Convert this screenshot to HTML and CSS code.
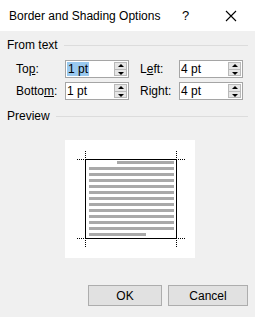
FILE: index.html
```html
<!DOCTYPE html>
<html>
<head>
<meta charset="utf-8">
<link rel="stylesheet" href="styles.css">
</head>
<body>
<div class="dialog">
  <div class="titlebar">
    <span class="title">Border and Shading Options</span>
    <span class="help">?</span>
    <span class="close"><svg width="12" height="12" viewBox="0 0 12 12"><path d="M1 1L11 11M11 1L1 11" stroke="#000" stroke-width="1.1" fill="none"/></svg></span>
  </div>
  <div class="content">
    <div class="legend"><span>From text</span><span class="rule"></span></div>
    <div class="fields">
      <label class="lbl">To<u>p</u>:</label>
      <div class="spin"><span class="val"><span class="sel">1 pt</span></span><span class="arrows"><span class="up"></span><span class="down"></span></span></div>
      <label class="lbl lbl2">L<u>e</u>ft:</label>
      <div class="spin"><span class="val">4 pt</span><span class="arrows"><span class="up"></span><span class="down"></span></span></div>
      <label class="lbl">Botto<u>m</u>:</label>
      <div class="spin"><span class="val">1 pt</span><span class="arrows"><span class="up"></span><span class="down"></span></span></div>
      <label class="lbl lbl2">Ri<u>g</u>ht:</label>
      <div class="spin"><span class="val">4 pt</span><span class="arrows"><span class="up"></span><span class="down"></span></span></div>
    </div>
    <div class="legend legend2"><span>Preview</span><span class="rule"></span></div>
    <div class="preview">
      <div class="page">
        <span class="mark tl"></span><span class="mark tr"></span><span class="mark bl"></span><span class="mark br"></span>
        <div class="line first"></div>
        <div class="line"></div><div class="line"></div><div class="line"></div><div class="line"></div>
        <div class="line"></div><div class="line"></div><div class="line"></div><div class="line"></div>
        <div class="line"></div><div class="line"></div><div class="line"></div>
        <div class="line last"></div>
      </div>
    </div>
    <div class="buttons">
      <button class="btn ok">OK</button>
      <button class="btn cancel">Cancel</button>
    </div>
  </div>
</div>
</body>
</html>
```

FILE: styles.css
```css
html, body {
  margin: 0;
  padding: 0;
  background: #f0f0f0;
}
.dialog {
  width: 255px;
  height: 317px;
  font-family: "Liberation Sans", Arial, sans-serif;
  font-size: 12px;
  color: #000;
  background: #f0f0f0;
}
.titlebar {
  height: 31px;
  background: #fff;
  display: flex;
  align-items: center;
}
.title {
  margin-left: 9px;
  font-size: 12px;
  flex: 1;
}
.help {
  width: 14px;
  font-size: 13px;
  margin-right: 29px;
}
.close {
  width: 12px;
  height: 12px;
  margin-right: 18px;
  display: flex;
}
.content {
  padding: 0 7px 0 7px;
}
.legend {
  display: flex;
  align-items: center;
  height: 14px;
  margin-top: 7px;
}
.legend .rule {
  flex: 1;
  height: 1px;
  background: #dcdcdc;
  margin-left: 6px;
}
.legend2 {
  margin-top: 9px;
}
.fields {
  display: grid;
  grid-template-columns: 49px 64px 50px 64px;
  grid-auto-rows: 18px;
  row-gap: 4px;
  margin-top: 8px;
  margin-left: 9px;
  align-items: center;
}
.lbl2 {
  margin-left: 11px;
}
.spin {
  height: 18px;
  box-sizing: border-box;
  border: 1px solid #a5a5a5;
  background: #fff;
  display: flex;
  align-items: center;
}
.val {
  flex: 1;
  padding-left: 1px;
  line-height: 14px;
}
.sel {
  background: #99c9ef;
  display: inline-block;
  padding: 0 1px;
  line-height: 14px;
}
.arrows {
  width: 13px;
  height: 14px;
  margin-right: 1px;
  display: flex;
  flex-direction: column;
}
.up, .down {
  flex: 1;
  background: #e6e6e6;
  border: 1px solid #b9b9b9;
  position: relative;
}
.up { border-bottom: none; }
.up::after, .down::after {
  content: "";
  position: absolute;
  left: 3px;
  border-left: 3px solid transparent;
  border-right: 3px solid transparent;
}
.up::after {
  top: 1px;
  border-bottom: 3px solid #000;
}
.down::after {
  top: 2px;
  border-top: 3px solid #000;
}
.preview {
  width: 130px;
  height: 118px;
  box-sizing: border-box;
  margin-top: 17px;
  margin-left: 58px;
  background: #fff;
  padding: 19px 0 0 20px;
}
.page {
  position: relative;
  width: 92px;
  height: 80px;
  box-sizing: border-box;
  border: 1.5px solid #000;
  padding: 1px 2px 0 3px;
  display: flex;
  flex-direction: column;
  gap: 3px;
}
.line {
  height: 3px;
  background: #a9a9a9;
  flex: none;
}
.line.first {
  margin-left: 28px;
}
.line.last {
  margin-right: 28px;
}
.mark {
  position: absolute;
  width: 8px;
  height: 8px;
}
.mark.tl {
  left: -9px;
  top: -9px;
  border-right: 1px dotted #000;
  border-bottom: 1px dotted #000;
}
.mark.tr {
  right: -9px;
  top: -9px;
  border-left: 1px dotted #000;
  border-bottom: 1px dotted #000;
}
.mark.bl {
  left: -9px;
  bottom: -9px;
  border-right: 1px dotted #000;
  border-top: 1px dotted #000;
}
.mark.br {
  right: -9px;
  bottom: -9px;
  border-left: 1px dotted #000;
  border-top: 1px dotted #000;
}
.buttons {
  display: flex;
  justify-content: flex-end;
  gap: 6px;
  margin-top: 27px;
}
.btn {
  font-family: "Liberation Sans", Arial, sans-serif;
  font-size: 12px;
  height: 21px;
  background: #e1e1e1;
  border: 1px solid #adadad;
  padding: 0;
  color: #000;
}
.ok { width: 74px; }
.cancel { width: 80px; }
```
